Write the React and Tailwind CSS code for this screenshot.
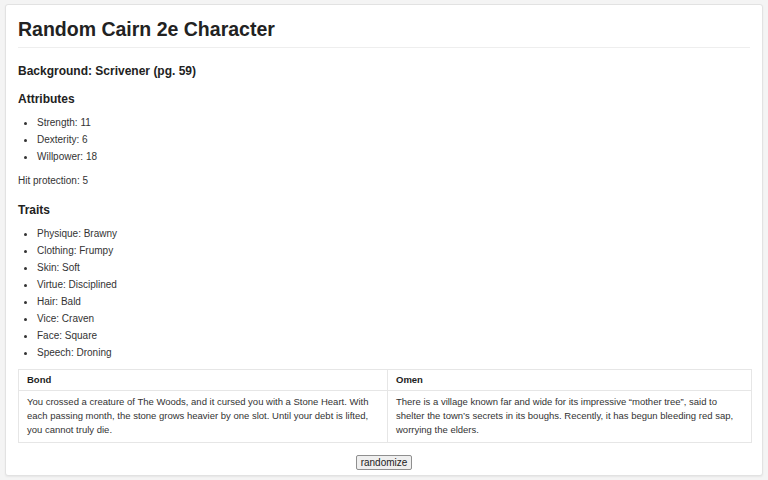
import React from 'react';

const atributos = [
  ['Strength', '11'],
  ['Dexterity', '6'],
  ['Willpower', '18'],
];

const tracos = [
  ['Physique', 'Brawny'],
  ['Clothing', 'Frumpy'],
  ['Skin', 'Soft'],
  ['Virtue', 'Disciplined'],
  ['Hair', 'Bald'],
  ['Vice', 'Craven'],
  ['Face', 'Square'],
  ['Speech', 'Droning'],
];

const Lista = ({ itens }) => (
  <ul className="list-disc pl-[19px] marker:text-[11px]">
    {itens.map(([label, valor]) => (
      <li key={label} className="h-[17px] leading-[17px] text-[10px] text-[#333]">
        {label}: {valor}
      </li>
    ))}
  </ul>
);

const App = () => {
  return (
    <div
      className="h-[480px] w-[768px] bg-[#f4f4f4] pt-[4px] pl-[5px]"
      style={{ fontFamily: '"Liberation Sans", Arial, sans-serif' }}
    >
      <div className="w-[758px] h-[472px] bg-white border border-[#e2e2e2] rounded-[3px] shadow-[0_1px_2px_rgba(0,0,0,0.06)] px-[12px] pt-[12px]">
        {/* Título */}
        <h1 className="text-[19.5px] leading-[24px] font-bold text-[#222] pb-[6px] border-b border-[#eeeeee]">
          Random Cairn 2e Character
        </h1>

        <h2 className="mt-[15px] text-[12px] leading-[16px] font-bold text-[#222]">
          Background: Scrivener (pg. 59)
        </h2>

        {/* Atributos */}
        <h3 className="mt-[12px] text-[12px] leading-[16px] font-bold text-[#222]">Attributes</h3>
        <div className="mt-[7px]">
          <Lista itens={atributos} />
        </div>
        <p className="mt-[7px] h-[17px] leading-[17px] text-[10px] text-[#333]">Hit protection: 5</p>

        {/* Traços */}
        <h3 className="mt-[13px] text-[12px] leading-[16px] font-bold text-[#222]">Traits</h3>
        <div className="mt-[7px]">
          <Lista itens={tracos} />
        </div>

        {/* Bond e Omen */}
        <table className="mt-[8px] w-[734px] border-collapse border border-[#e6e6e6] text-[9.5px] text-[#333] table-fixed">
          <thead>
            <tr>
              <th className="w-[369px] text-left font-bold text-[#222] px-[8px] h-[21px] border-r border-b border-[#e6e6e6]">Bond</th>
              <th className="text-left font-bold text-[#222] px-[8px] h-[21px] border-b border-[#e6e6e6]">Omen</th>
            </tr>
          </thead>
          <tbody>
            <tr>
              <td className="align-top px-[8px] pt-[4px] pb-[5px] leading-[14px] border-r border-[#e6e6e6]">
                You crossed a creature of The Woods, and it cursed you with a Stone Heart. With each passing month, the stone grows heavier by one slot. Until your debt is lifted, you cannot truly die.
              </td>
              <td className="align-top px-[8px] pt-[4px] pb-[5px] leading-[14px]">
                There is a village known far and wide for its impressive “mother tree”, said to shelter the town’s secrets in its boughs. Recently, it has begun bleeding red sap, worrying the elders.
              </td>
            </tr>
          </tbody>
        </table>

        <div className="mt-[12px] flex justify-center">
          <button className="h-[15px] px-[4px] text-[10px] leading-[13px] text-[#222] bg-[#efefef] border border-[#8f8f8f] rounded-[2px]">
            randomize
          </button>
        </div>
      </div>
    </div>
  );
};

export default App;
